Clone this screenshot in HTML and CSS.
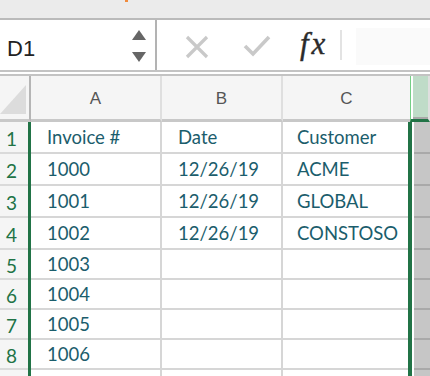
FILE: index.html
```html
<!DOCTYPE html>
<html lang="en">
<head>
    <meta charset="UTF-8">
    <meta name="viewport" content="width=device-width, initial-scale=1.0">
    <title>Invoices</title>
    <link rel="stylesheet" href="styles.css">
</head>
<body>
    <div class="titlebar"><span class="dot"></span></div>

    <div class="formulabar">
        <div class="namebox">
            <span class="ref">D1</span>
            <div class="spin">
                <span class="up"></span>
                <span class="down"></span>
            </div>
        </div>
        <div class="tools">
            <svg class="icon" width="24" height="24" viewBox="0 0 24 24">
                <path d="M2 2 L22 22 M22 2 L2 22" stroke="#c9c9c9" stroke-width="3.2" fill="none"/>
            </svg>
            <svg class="icon check" width="30" height="24" viewBox="0 0 30 24">
                <path d="M3 12 L11 20 L27 3" stroke="#c9c9c9" stroke-width="3.6" fill="none"/>
            </svg>
            <span class="fx">fx</span>
            <span class="divider"></span>
        </div>
        <div class="input"></div>
    </div>

    <div class="sheet">
        <div class="row head">
            <div class="corner"><span class="tri"></span></div>
            <div class="hc ca">A</div>
            <div class="hc cb">B</div>
            <div class="hc cc">C</div>
            <div class="hc cd"></div>
        </div>
        <div class="row">
            <div class="rh">1</div>
            <div class="c ca">Invoice #</div>
            <div class="c cb">Date</div>
            <div class="c cc">Customer</div>
            <div class="cd"></div>
        </div>
        <div class="row">
            <div class="rh">2</div>
            <div class="c ca">1000</div>
            <div class="c cb">12/26/19</div>
            <div class="c cc">ACME</div>
            <div class="cd"></div>
        </div>
        <div class="row">
            <div class="rh">3</div>
            <div class="c ca">1001</div>
            <div class="c cb">12/26/19</div>
            <div class="c cc">GLOBAL</div>
            <div class="cd"></div>
        </div>
        <div class="row">
            <div class="rh">4</div>
            <div class="c ca">1002</div>
            <div class="c cb">12/26/19</div>
            <div class="c cc">CONSTOSO</div>
            <div class="cd"></div>
        </div>
        <div class="row short">
            <div class="rh">5</div>
            <div class="c ca">1003</div>
            <div class="c cb"></div>
            <div class="c cc"></div>
            <div class="cd"></div>
        </div>
        <div class="row short">
            <div class="rh">6</div>
            <div class="c ca">1004</div>
            <div class="c cb"></div>
            <div class="c cc"></div>
            <div class="cd"></div>
        </div>
        <div class="row short">
            <div class="rh">7</div>
            <div class="c ca">1005</div>
            <div class="c cb"></div>
            <div class="c cc"></div>
            <div class="cd"></div>
        </div>
        <div class="row short">
            <div class="rh">8</div>
            <div class="c ca">1006</div>
            <div class="c cb"></div>
            <div class="c cc"></div>
            <div class="cd"></div>
        </div>
        <div class="row short">
            <div class="rh"></div>
            <div class="c ca"></div>
            <div class="c cb"></div>
            <div class="c cc"></div>
            <div class="cd"></div>
        </div>
    </div>
</body>
</html>
```

FILE: styles.css
```css
* { box-sizing: border-box; }
html, body { margin: 0; height: 100%; overflow: hidden; }
body { background: #fff; font-family: "Liberation Sans", Arial, sans-serif; }

.titlebar { height: 20px; background: #ebebeb; border-bottom: 2px solid #bababa; padding-left: 125px; }
.titlebar .dot { display: block; width: 3px; height: 2px; background: #f08a3c; }

.formulabar { display: flex; height: 56px; border-bottom: 6px double #c3c3c3; }
.namebox { width: 157px; display: flex; align-items: center; justify-content: space-between; padding: 0 9px 0 7px; border-right: 2px solid #b3b3b3; }
.ref { font-size: 22px; color: #222; padding-top: 8px; }
.spin { display: flex; flex-direction: column; gap: 12px; padding-top: 2px; }
.spin span { width: 0; height: 0; border-left: 7px solid transparent; border-right: 7px solid transparent; }
.spin .up { border-bottom: 10px solid #666; }
.spin .down { border-top: 10px solid #666; }

.tools { display: flex; align-items: center; padding: 4px 0 0 28px; }
.icon { display: block; }
.check { margin-left: 33px; margin-top: -2px; }
.fx { font-family: "Liberation Serif", serif; font-style: italic; font-size: 31px; letter-spacing: 3px; color: #2a2a2a; -webkit-text-stroke: 0.4px #2a2a2a; margin-left: 28px; margin-top: -6px; }
.divider { width: 2px; height: 30px; background: #e3e3e3; margin-left: 12px; margin-top: -4px; }
.input { flex: 1; margin: 8px 0 5px 14px; background: #fafafa; }

.sheet { display: flex; flex-direction: column; }
.row { display: flex; height: 32px; }
.row.short { height: 30px; }
.row.head { height: 46px; }

.corner { width: 31px; display: flex; align-items: flex-end; padding: 0 3px 5px 0; background: #f5f5f5; border-right: 2px solid #b5b5b5; border-bottom: 3px solid #c8c8c8; }
.tri { display: block; width: 26px; height: 29px; background: #dcdcdc; clip-path: polygon(100% 0, 100% 100%, 0 100%); }

.hc { display: flex; align-items: center; justify-content: center; background: #f5f5f5; border-right: 2px solid #dfdfdf; border-bottom: 3px solid #c8c8c8; color: #555; font-size: 17px; padding-top: 2px; }
.hc.cc { width: 127px; border-right: none; }
.hc.cd { flex: 1; background: #bfdcc8; border-left: 1px solid #74cf85; border-bottom-color: #217346; }

.rh { width: 31px; display: flex; align-items: center; padding-left: 6px; background: #f5f5f5; border-right: 3px solid #217346; box-shadow: inset 0 -2px 0 #dadada; color: #217346; font-family: Lato, "Open Sans", sans-serif; font-size: 19px; }

.c { display: flex; align-items: center; padding-left: 16px; border-right: 2px solid #d6d6d6; border-bottom: 2px solid #d6d6d6; color: #1b5d6c; font-family: Lato, "Open Sans", sans-serif; font-size: 18.5px; white-space: nowrap; }
.ca { width: 131px; }
.cb { width: 121px; }
.cc { width: 125px; }
.c.cc { border-right: none; padding-left: 14px; }
.cd { flex: 1; background: #c6c6c6; border-left: 4px solid #217346; box-shadow: inset 2px 0 0 #fff, inset 0 -2px 0 #a9a9a9; }
```
